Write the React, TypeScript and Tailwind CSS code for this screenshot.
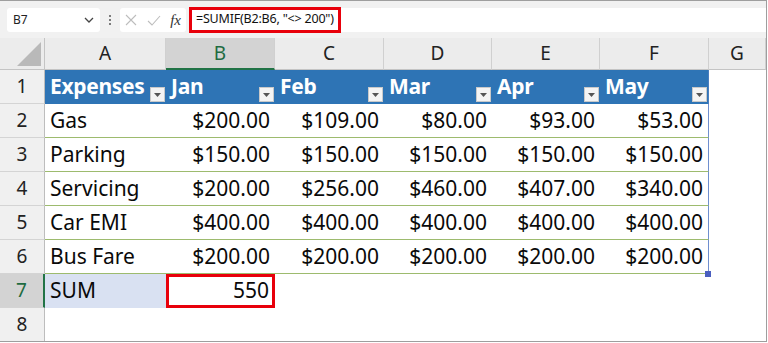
import React from "react";

const cols = ["A", "B", "C", "D", "E", "F", "G"];
const months = ["Jan", "Feb", "Mar", "Apr", "May"];

const rows = [
    ["Gas", "$200.00", "$109.00", "$80.00", "$93.00", "$53.00"],
    ["Parking", "$150.00", "$150.00", "$150.00", "$150.00", "$150.00"],
    ["Servicing", "$200.00", "$256.00", "$460.00", "$407.00", "$340.00"],
    ["Car EMI", "$400.00", "$400.00", "$400.00", "$400.00", "$400.00"],
    ["Bus Fare", "$200.00", "$200.00", "$200.00", "$200.00", "$200.00"],
];

const font = { fontFamily: '"Noto Sans", "Open Sans", sans-serif' };

function FilterBtn() {
    return (
        <span className="self-end mb-[2px] mr-[1px] w-[15px] h-[15px] shrink-0 bg-[#f4f4f4] border border-[#c9c9c9] flex items-center justify-center">
            <svg width="7" height="4" viewBox="0 0 7 4">
                <path d="M0 0h7L3.5 4z" fill="#555" />
            </svg>
        </span>
    );
}

function RowHead({ n, active }: { n: number; active?: boolean }) {
    return (
        <div
            className={`h-[34px] flex items-center justify-center text-[19px] border-b border-[#d4d4d4] ${
                active
                    ? "bg-[#d3d3d3] text-[#1e6b41] border-r-2 border-r-[#217346]"
                    : "bg-[#f0f0f0] text-[#222] border-r border-r-[#bdbdbd]"
            }`}
        >
            {n}
        </div>
    );
}

export default function App() {
    return (
        <div
            className="w-[767px] h-[342px] bg-white border-t border-r border-b border-[#9e9e9e] overflow-hidden"
            style={font}
        >
            {/* formula bar */}
            <div className="h-[37px] bg-[#f1f1f1] flex items-start pt-[7px] pl-[7px]">
                <div className="w-[93px] h-[24px] bg-white rounded-[3px] flex items-center justify-between px-[6px] text-[12px] text-[#222]">
                    <span>B7</span>
                    <svg width="10" height="6" viewBox="0 0 10 6">
                        <path d="M1 1l4 4 4-4" stroke="#444" strokeWidth="1.3" fill="none" />
                    </svg>
                </div>
                <div className="w-[20px] h-[24px] flex flex-col items-center justify-center gap-[2px]">
                    <span className="w-[2px] h-[2px] bg-[#555] rounded-full" />
                    <span className="w-[2px] h-[2px] bg-[#555] rounded-full" />
                    <span className="w-[2px] h-[2px] bg-[#555] rounded-full" />
                </div>
                <div className="w-[66px] h-[24px] bg-white rounded-[3px] flex items-center justify-between px-[5px]">
                    <svg width="12" height="12" viewBox="0 0 12 12">
                        <path d="M1 1l10 10M11 1L1 11" stroke="#bdbdbd" strokeWidth="1.1" />
                    </svg>
                    <svg width="14" height="11" viewBox="0 0 14 11">
                        <path d="M1 6l4 4 8-9" stroke="#bdbdbd" strokeWidth="1.1" fill="none" />
                    </svg>
                    <span
                        className="text-[15px] italic text-[#333] leading-none"
                        style={{ fontFamily: '"Liberation Serif", serif' }}
                    >
                        fx
                    </span>
                </div>
                <div className="ml-[3px] flex-1 h-[24px] bg-white flex items-center">
                    <div className="h-[26px] -mt-[1px] border-[3px] border-[#e8000b] flex items-center px-[4px] text-[12.5px] tracking-[-0.2px] text-[#111] whitespace-pre">
                        =SUMIF(B2:B6, "&lt;&gt; 200")
                    </div>
                </div>
            </div>

            {/* sheet */}
            <div className="grid grid-cols-[45px_121px_109px_109px_108px_108px_109px_1fr]">
                {/* column headers */}
                <div className="h-[32px] bg-[#ececec] border-r border-b border-[#c4c4c4] flex items-end justify-end p-[3px]">
                    <svg width="24" height="24" viewBox="0 0 24 24">
                        <path d="M24 0V24H0z" fill="#b9b9b9" />
                    </svg>
                </div>
                {cols.map((c) => (
                    <div
                        key={c}
                        className={`h-[32px] flex items-center justify-center text-[19px] border-r border-[#d0d0d0] ${
                            c === "B"
                                ? "bg-[#d3d3d3] text-[#1e6b41] border-b-2 border-b-[#217346]"
                                : "bg-[#ececec] text-[#222] border-b border-b-[#c4c4c4]"
                        }`}
                    >
                        {c}
                    </div>
                ))}

                {/* row 1: table header */}
                <RowHead n={1} />
                {["Expenses", ...months].map((h) => (
                    <div
                        key={h}
                        className={`h-[34px] bg-[#2e74b5] text-white font-bold text-[21px] flex items-center justify-between pl-[5px] tracking-[-0.3px] ${
                            h === "May" ? "border-r border-[#4a7ec0]" : ""
                        }`}
                    >
                        <span>{h}</span>
                        <FilterBtn />
                    </div>
                ))}
                <div className="h-[34px]" />

                {/* data rows */}
                {rows.map((r, i) => (
                    <React.Fragment key={r[0]}>
                        <RowHead n={i + 2} />
                        {r.map((v, j) => (
                            <div
                                key={j}
                                className={`h-[34px] flex items-center text-[21px] text-[#0a0a0a] border-b border-b-[#9dbb6e] ${
                                    j === 0 ? "pl-[5px]" : "justify-end pr-[5px]"
                                } ${j === 5 ? "border-r border-r-[#6f8fcf]" : ""}`}
                            >
                                {v}
                            </div>
                        ))}
                        <div className="h-[34px] flex items-end">
                            {i === 4 && <span className="w-[6px] h-[6px] bg-[#4a5fbf] -ml-[4px] mb-[-3px]" />}
                        </div>
                    </React.Fragment>
                ))}

                {/* row 7 */}
                <RowHead n={7} active />
                <div className="h-[34px] bg-[#d9e1f2] flex items-center pl-[5px] text-[21px] text-[#0a0a0a]">SUM</div>
                <div className="h-[34px] border-[3px] border-[#e8000b] flex items-center justify-end pr-[3px] text-[21px] text-[#0a0a0a]">
                    550
                </div>
                <div className="col-span-5 h-[34px]" />

                {/* row 8 */}
                <RowHead n={8} />
                <div className="col-span-7 h-[34px]" />
            </div>
        </div>
    );
}
